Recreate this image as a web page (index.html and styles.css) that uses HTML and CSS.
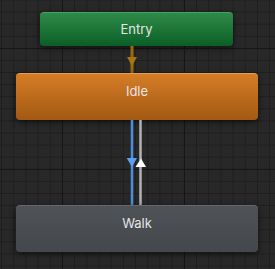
FILE: index.html
```html
<!DOCTYPE html>
<html>
<head>
<meta charset="utf-8">
<link rel="stylesheet" href="styles.css">
</head>
<body>
<div class="canvas">
  <div class="node entry">Entry</div>
  <svg class="link link-short" width="275" height="27" viewBox="0 0 275 27">
    <line x1="132" y1="0" x2="132" y2="27" stroke="#9a6a10" stroke-width="3"/>
    <polygon points="127,11 137,11 132,20" fill="#a8740f"/>
  </svg>
  <div class="node idle">Idle</div>
  <svg class="link link-long" width="275" height="85" viewBox="0 0 275 85">
    <line x1="132" y1="0" x2="132" y2="85" stroke="#4a8fdc" stroke-width="2.5"/>
    <line x1="140.5" y1="0" x2="140.5" y2="85" stroke="#b4b4b4" stroke-width="2.5"/>
    <polygon points="126.7,38 137,38 132,47" fill="#5aa0f0"/>
    <polygon points="135.5,47 146,47 141,38.5" fill="#ffffff"/>
  </svg>
  <div class="node walk">Walk</div>
</div>
</body>
</html>
```
FILE: styles.css
```css
html, body {
  margin: 0;
  padding: 0;
  background: #282828;
}
.canvas {
  width: 275px;
  height: 269px;
  overflow: hidden;
  display: flex;
  flex-direction: column;
  align-items: flex-start;
  padding-top: 12px;
  box-sizing: border-box;
  background-color: #282828;
  background-image:
    linear-gradient(to right, #161616 1px, transparent 1px),
    linear-gradient(to bottom, #161616 1px, transparent 1px),
    linear-gradient(to right, #1e1e1e 1px, transparent 1px),
    linear-gradient(to bottom, #1e1e1e 1px, transparent 1px);
  background-size: 122px 121px, 122px 121px, 12.2px 12.1px, 12.2px 12.1px;
  background-position: 62px 48px, 62px 48px, 1px 11.6px, 1px 11.6px;
  font-family: Inter, "Noto Sans", sans-serif;
}
.node {
  box-sizing: border-box;
  border-radius: 4px;
  color: #e6e6e6;
  font-size: 13px;
  text-align: center;
  box-shadow: 0 2px 6px rgba(0, 0, 0, 0.55);
  flex: none;
}
.entry {
  margin-left: 40px;
  width: 193px;
  height: 34px;
  line-height: 34px;
  background: linear-gradient(to bottom, #2e8a48, #0a5f26);
  border-top: 1px solid #4aa262;
  line-height: 32px;
}
.idle {
  margin-left: 16px;
  width: 242px;
  height: 47px;
  padding-top: 1px;
  line-height: 32px;
  background: linear-gradient(to bottom, #d57d27, #a35912);
  border-top: 1px solid #e8a050;
}
.walk {
  margin-left: 16px;
  width: 242px;
  height: 47px;
  padding-top: 1px;
  line-height: 32px;
  background: linear-gradient(to bottom, #4f5257, #44474b);
  border-top: 1px solid #64676c;
}
.link {
  display: block;
  flex: none;
}
```
